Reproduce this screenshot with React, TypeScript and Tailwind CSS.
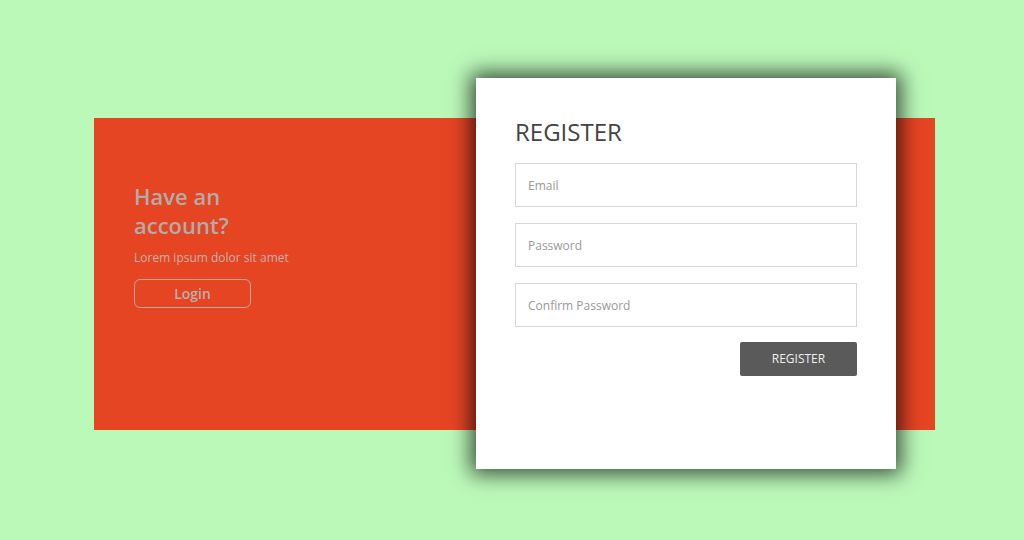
export default function App() {
  return (
    <div
      className="h-[540px] w-full overflow-hidden bg-[#bbf9b9] pt-[118px] pl-[94px]"
      style={{ fontFamily: '"Open Sans", "Noto Sans", sans-serif' }}
    >
      {/* red panel with the register card over it */}
      <div className="flex h-[312px] w-[841px] items-start bg-[#e64524]">
        <div className="w-[382px] pl-10 pt-[64px]">
          <h2 className="w-[160px] text-[22px] font-semibold leading-[29px] text-[#b2aca8]">
            Have an account?
          </h2>
          <p className="mt-[10px] text-[12px] leading-4 text-[#c9b0a6]">
            Lorem ipsum dolor sit amet
          </p>
          <button className="mt-[13px] h-[29px] w-[117px] rounded-md border border-[#c3a79c] text-[14px] font-semibold text-[#b9b0ab]">
            Login
          </button>
        </div>

        <div className="-mt-10 h-[391px] w-[420px] shrink-0 bg-white px-[39px] pt-[38px] shadow-[0_0_20px_5px_rgba(0,0,0,0.7)]">
          <h1 className="text-[24px] leading-8 text-[#444]">REGISTER</h1>
          <div className="mt-[15px] flex flex-col gap-4">
            {["Email", "Password", "Confirm Password"].map((p) => (
              <input
                key={p}
                placeholder={p}
                type={p === "Email" ? "text" : "password"}
                className="h-11 w-[342px] border border-[#d6d6d6] px-3 text-[12px] text-[#555] outline-none placeholder:text-[#999]"
              />
            ))}
          </div>
          <div className="mt-[15px] flex w-[342px] justify-end">
            <button className="h-[34px] w-[117px] rounded-[2px] bg-[#5a5a5a] text-[12px] text-[#eee]">
              REGISTER
            </button>
          </div>
        </div>
      </div>
    </div>
  );
}
